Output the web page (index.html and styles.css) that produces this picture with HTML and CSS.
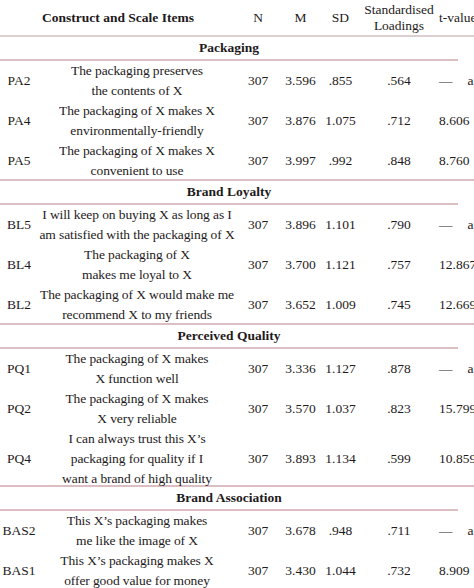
FILE: index.html
```html
<!DOCTYPE html>
<html>
<head>
<meta charset="utf-8">
<link rel="stylesheet" href="styles.css">
</head>
<body>
<div class="table">
  <div class="row head">
    <div class="construct">Construct and Scale Items</div>
    <div class="num">N</div>
    <div class="num">M</div>
    <div class="num">SD</div>
    <div class="num">Standardised<br>Loadings</div>
    <div class="num tv">t-value</div>
  </div>

  <div class="section">Packaging</div>
  <div class="row"><div class="code">PA2</div><div class="item">The packaging preserves<br>the contents of X</div><div class="num">307</div><div class="num">3.596</div><div class="num">.855</div><div class="num">.564</div><div class="num tv">—<span class="note">a</span></div></div>
  <div class="row"><div class="code">PA4</div><div class="item">The packaging of X makes X<br>environmentally-friendly</div><div class="num">307</div><div class="num">3.876</div><div class="num">1.075</div><div class="num">.712</div><div class="num tv">8.606</div></div>
  <div class="row last"><div class="code">PA5</div><div class="item">The packaging of X makes X<br>convenient to use</div><div class="num">307</div><div class="num">3.997</div><div class="num">.992</div><div class="num">.848</div><div class="num tv">8.760</div></div>

  <div class="section">Brand Loyalty</div>
  <div class="row"><div class="code">BL5</div><div class="item">I will keep on buying X as long as I<br>am satisfied with the packaging of X</div><div class="num">307</div><div class="num">3.896</div><div class="num">1.101</div><div class="num">.790</div><div class="num tv">—<span class="note">a</span></div></div>
  <div class="row"><div class="code">BL4</div><div class="item">The packaging of X<br>makes me loyal to X</div><div class="num">307</div><div class="num">3.700</div><div class="num">1.121</div><div class="num">.757</div><div class="num tv">12.867</div></div>
  <div class="row last"><div class="code">BL2</div><div class="item">The packaging of X would make me<br>recommend X to my friends</div><div class="num">307</div><div class="num">3.652</div><div class="num">1.009</div><div class="num">.745</div><div class="num tv">12.669</div></div>

  <div class="section">Perceived Quality</div>
  <div class="row"><div class="code">PQ1</div><div class="item">The packaging of X makes<br>X function well</div><div class="num">307</div><div class="num">3.336</div><div class="num">1.127</div><div class="num">.878</div><div class="num tv">—<span class="note">a</span></div></div>
  <div class="row"><div class="code">PQ2</div><div class="item">The packaging of X makes<br>X very reliable</div><div class="num">307</div><div class="num">3.570</div><div class="num">1.037</div><div class="num">.823</div><div class="num tv">15.799</div></div>
  <div class="row last tall"><div class="code">PQ4</div><div class="item">I can always trust this X’s<br>packaging for quality if I<br>want a brand of high quality</div><div class="num">307</div><div class="num">3.893</div><div class="num">1.134</div><div class="num">.599</div><div class="num tv">10.859</div></div>

  <div class="section">Brand Association</div>
  <div class="row"><div class="code">BAS2</div><div class="item">This X’s packaging makes<br>me like the image of X</div><div class="num">307</div><div class="num">3.678</div><div class="num">.948</div><div class="num">.711</div><div class="num tv">—<span class="note">a</span></div></div>
  <div class="row"><div class="code">BAS1</div><div class="item">This X’s packaging makes X<br>offer good value for money</div><div class="num">307</div><div class="num">3.430</div><div class="num">1.044</div><div class="num">.732</div><div class="num tv">8.909</div></div>
</div>
</body>
</html>
```

FILE: styles.css
```css
html, body {
  margin: 0;
  padding: 0;
  background: #ffffff;
}
body {
  width: 474px;
  height: 588px;
  overflow: hidden;
  font-family: "Liberation Serif", "Times New Roman", serif;
  font-size: 13.5px;
  color: #1e1a1b;
}
.table {
  width: 480px;
  display: flex;
  flex-direction: column;
}
.row {
  display: grid;
  grid-template-columns: 38px 198px 44px 41px 39px 78px 42px;
  align-items: center;
  height: 40px;
  box-sizing: border-box;
}
.row.head {
  height: 37px;
  border-bottom: 2px solid #dccfd0;
}
.row.head .construct {
  grid-column: 1 / 3;
  text-align: center;
  font-weight: bold;
}
.row.head .num {
  line-height: 16px;
}
.row.last {
  border-bottom: 2px solid #dbbfc2;
}
.row.tall {
  height: 58px;
}
.section {
  height: 24px;
  box-sizing: border-box;
  border-bottom: 2px solid #dbbfc2;
  font-weight: bold;
  text-align: center;
  width: 458px;
  line-height: 22px;
}
.code {
  text-align: center;
}
.item {
  text-align: center;
  line-height: 20px;
  white-space: nowrap;
  letter-spacing: -0.1px;
}
.num {
  text-align: center;
  white-space: nowrap;
}
.tv {
  text-align: left;
  padding-left: 1px;
}
.note {
  margin-left: 15px;
}
```
